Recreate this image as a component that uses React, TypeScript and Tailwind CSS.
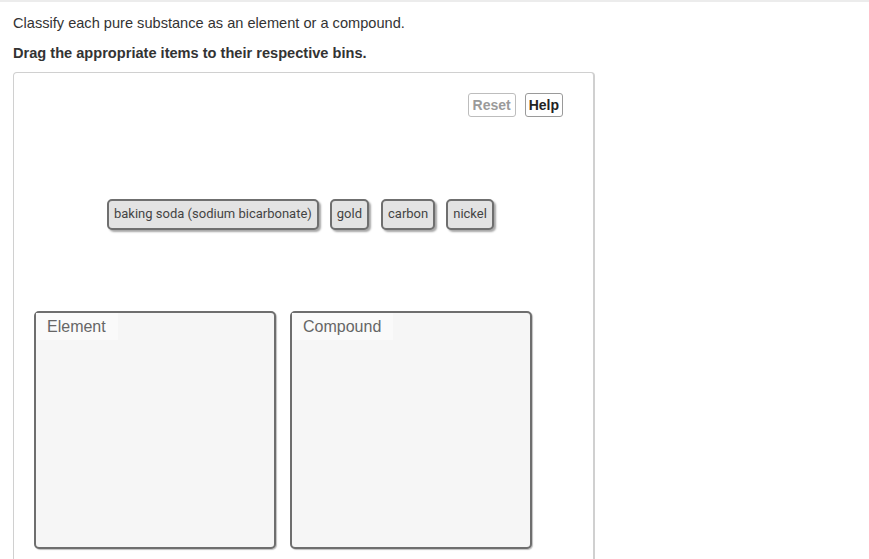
import React from 'react';

const items = ['baking soda (sodium bicarbonate)', 'gold', 'carbon', 'nickel'];

const Bin: React.FC<{ label: string }> = ({ label }) => (
  <div className="w-[242px] h-[238px] rounded-[5px] border-2 border-[#6e6e6e] bg-[#f6f6f6] shadow-[1px_1px_1px_rgba(0,0,0,0.25)]">
    <div className="inline-block bg-[#fafafa] pl-[11px] pr-[12px] pt-[4px] pb-[3px] text-[16px] leading-[20px] text-[#666]">
      {label}
    </div>
  </div>
);

export default function App() {
  return (
    <div className="w-[869px] h-[559px] overflow-hidden bg-white border-t-2 border-[#ececec] font-['Liberation_Sans',Arial,sans-serif]">
      <p className="pl-[13px] pt-[12px] text-[14.6px] leading-[18px] text-[#333]">
        Classify each pure substance as an element or a compound.
      </p>
      <p className="pl-[13px] mt-[12px] text-[14.6px] leading-[18px] font-bold text-[#333]">
        Drag the appropriate items to their respective bins.
      </p>

      <div className="ml-[13px] mt-[10px] w-[582px] h-[500px] rounded-[4px] border border-[#d0d0d0] border-r-2">
        <div className="flex justify-end gap-[9px] pt-[20px] pr-[30px]">
          <button className="h-[24px] px-[4px] rounded-[3px] border border-[#bdbdbd] text-[14px] font-bold text-[#9a9a9a] bg-white">
            Reset
          </button>
          <button className="h-[24px] px-[3px] rounded-[3px] border border-[#9a9a9a] text-[14px] font-bold text-[#222] bg-white">
            Help
          </button>
        </div>

        <div className="flex pl-[93px] mt-[82px] font-['Roboto',sans-serif]">
          {items.map((item, i) => (
            <div
              key={item}
              className={`h-[31px] px-[5px] pb-[2px] flex items-center rounded-[5px] border-2 border-[#6f6f6f] bg-[#e3e3e3] text-[13px] text-[#444] shadow-[2px_2px_2px_rgba(0,0,0,0.35)] ${i === 0 ? '' : i === 2 ? 'ml-[12px]' : 'ml-[11px]'}`}
            >
              {item}
            </div>
          ))}
        </div>

        <div className="flex gap-[14px] pl-[20px] mt-[81px]">
          <Bin label="Element" />
          <Bin label="Compound" />
        </div>
      </div>
    </div>
  );
}
